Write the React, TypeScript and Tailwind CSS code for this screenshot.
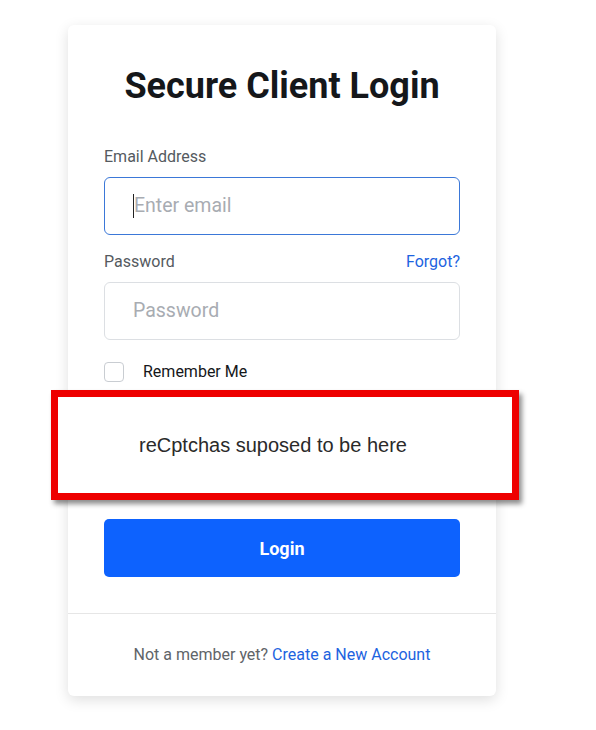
import React from "react";

export default function App() {
  return (
    <div className="min-h-[730px] w-[596px] bg-white" style={{ fontFamily: "Roboto, 'Liberation Sans', sans-serif" }}>
      <div className="pt-[25px] pl-[68px]">
        <div className="w-[428px] rounded-md bg-white shadow-[0_4px_14px_rgba(0,0,0,0.13)]">
          <div className="px-[36px] pt-[40px] pb-[36px]">
            <h1 className="text-center text-[36px] font-bold leading-[42px] text-[#15171a]">Secure Client Login</h1>
            <div className="mt-[39px]">
              <label className="block text-[16px] leading-[22px] text-[#555a60]">Email Address</label>
              <div className="mt-[9px] flex h-[58px] items-center rounded-md border border-[#3b78d8] px-[28px]">
                <span className="h-[24px] w-px bg-[#222]" />
                <input
                  className="w-full bg-transparent text-[19.5px] text-[#333] placeholder-[#a8acb2] outline-none"
                  placeholder="Enter email"
                />
              </div>
            </div>
            <div className="mt-[16px]">
              <div className="flex items-center justify-between">
                <label className="text-[16px] leading-[22px] text-[#555a60]">Password</label>
                <a className="text-[16px] leading-[22px] text-[#1d63e0]">Forgot?</a>
              </div>
              <div className="mt-[9px] flex h-[58px] items-center rounded-md border border-[#dcdfe3] px-[28px]">
                <input
                  type="password"
                  className="w-full bg-transparent text-[19.5px] text-[#333] placeholder-[#a8acb2] outline-none"
                  placeholder="Password"
                />
              </div>
            </div>
            <div className="mt-[22px] flex items-center">
              <span className="h-[20px] w-[20px] rounded-[4px] border border-[#c9cdd2]" />
              <span className="ml-[19px] text-[16px] leading-[20px] text-[#15171a]">Remember Me</span>
            </div>
            <div className="mt-[8px] -ml-[53px] -mr-[59px] flex h-[110px] items-center border-[7px] border-[#ee0000] bg-white pl-[81px] shadow-[3px_4px_5px_rgba(0,0,0,0.45)]">
              <span className="text-[20px] text-[#2a2a2a]" style={{ fontFamily: "'Liberation Sans', Arial, sans-serif" }}>
                reCptchas suposed to be here
              </span>
            </div>
            <button className="mt-[19px] flex h-[58px] w-full items-center justify-center rounded-[5px] bg-[#0d62fe] text-[18px] font-bold text-white">
              Login
            </button>
          </div>
          <div className="border-t border-[#e6e6e6] pt-[31px] pb-[31px] text-center text-[16px] leading-[20px] text-[#606468]">
            Not a member yet? <a className="text-[#1d63e0]">Create a New Account</a>
          </div>
        </div>
      </div>
    </div>
  );
}
